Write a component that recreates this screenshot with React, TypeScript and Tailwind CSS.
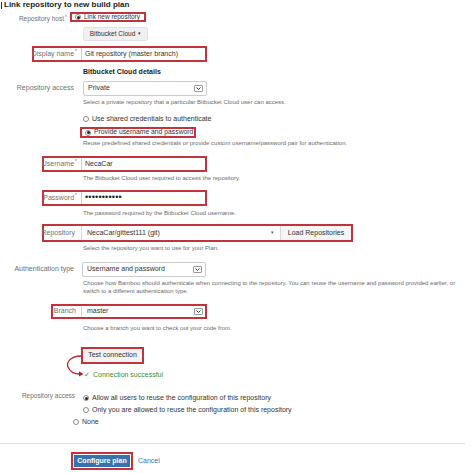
import React from 'react';

const Req = () => (
  <span className="text-[#d04437] text-[5px] relative -top-[2px] ml-[1px]">*</span>
);

const Radio = ({ checked }: { checked?: boolean }) => (
  <span className="inline-flex items-center justify-center w-[6px] h-[6px] rounded-full border border-[#8a8a8a] bg-white shrink-0">
    {checked && <span className="w-[3px] h-[3px] rounded-full bg-[#222]" />}
  </span>
);

const Chevron = () => (
  <span className="w-[9px] h-[7px] border border-[#9a9a9a] rounded-[1px] flex items-center justify-center bg-white">
    <svg width="5" height="3" viewBox="0 0 5 3">
      <path d="M0.5 0.5 L2.5 2.5 L4.5 0.5" fill="none" stroke="#333" strokeWidth="1" />
    </svg>
  </span>
);

const Help = ({ children, className = '' }: { children: React.ReactNode; className?: string }) => (
  <div className={`ml-[83px] text-[6px] leading-[8px] text-[#6b6b6b] whitespace-nowrap ${className}`}>{children}</div>
);

const App: React.FC = () => {
  return (
    <div className="w-[474px] h-[473px] bg-white overflow-hidden font-['Liberation_Sans',Arial,sans-serif] text-[#333] flex flex-col whitespace-nowrap">
      {/* title */}
      <div className="h-[10px] flex items-center pl-[1px]">
        <span className="w-[1px] h-[7px] bg-[#333] mr-[2px]" />
        <span className="text-[8px] font-bold text-[#222] leading-[10px]">Link repository to new build plan</span>
      </div>

      {/* repository host */}
      <div className="flex items-center h-[10px] mt-[2px]">
        <div className="w-[67px] text-right text-[6.5px] text-[#707070] leading-[10px] pt-[3px]">
          Repository host<Req />
        </div>
        <div className="ml-[3px] w-[76px] h-full border-2 border-[#c3333c] flex items-center gap-[3px] pl-[3px] text-[6.5px]">
          <Radio checked />
          <span>Link new repository</span>
        </div>
      </div>

      {/* bitbucket dropdown button */}
      <div className="mt-[5px] ml-[83px] w-[65px] h-[14px] bg-[#f0f0f0] border border-[#e2e2e2] rounded-[2px] flex items-center justify-center text-[6.5px] text-[#333]">
        Bitbucket Cloud <span className="ml-[3px] text-[5px]">▾</span>
      </div>

      {/* display name */}
      <div className="flex mt-[5px]">
        <div className="ml-[32px] w-[175px] h-[16px] border-2 border-[#c3333c] flex">
          <div className="w-[47px] flex items-center justify-end pr-[4px] text-[7px] text-[#707070]">
            Display name<Req />
          </div>
          <div className="flex-1 border-l border-[#cfcfcf] flex items-center pl-[3px] text-[7px]">Git repository (master branch)</div>
        </div>
      </div>

      {/* details heading */}
      <div className="mt-[6px] h-[8px] ml-[83px] text-[7px] font-bold leading-[8px] text-[#222]">Bitbucket Cloud details</div>

      {/* repository access select */}
      <div className="flex items-center h-[15px] mt-[5px]">
        <div className="w-[74px] text-right text-[7px] text-[#707070]">Repository access</div>
        <div className="ml-[9px] w-[124px] h-full border border-[#cccccc] rounded-[2px] flex items-center justify-between pl-[4px] pr-[3px] text-[7px]">
          Private
          <Chevron />
        </div>
      </div>
      <Help className="mt-[2px]">Select a private repository that a particular Bitbucket Cloud user can access.</Help>

      {/* auth radios */}
      <div className="mt-[9px] h-[8px] ml-[83px] flex items-center gap-[3px] text-[7px]">
        <Radio />
        <span>Use shared credentials to authenticate</span>
      </div>
      <div className="flex mt-[4px]">
        <div className="ml-[80px] w-[116px] h-[11px] border-2 border-[#c3333c] flex items-center gap-[3px] pl-[3px] text-[6.8px]">
          <Radio checked />
          <span>Provide username and password</span>
        </div>
      </div>
      <Help className="mt-[1px]">Reuse predefined shared credentials or provide custom username/password pair for authentication.</Help>

      {/* username */}
      <div className="flex mt-[9px]">
        <div className="ml-[42px] w-[165px] h-[16px] border-2 border-[#c3333c] flex">
          <div className="w-[37px] flex items-center justify-end pr-[4px] text-[7px] text-[#707070]">
            Username<Req />
          </div>
          <div className="flex-1 border-l border-[#cfcfcf] flex items-center pl-[3px] text-[7px]">NecaCar</div>
        </div>
      </div>
      <Help className="mt-[2px]">The Bitbucket Cloud user required to access the repository.</Help>

      {/* password */}
      <div className="flex mt-[8px]">
        <div className="ml-[42px] w-[165px] h-[16px] border-2 border-[#c3333c] flex">
          <div className="w-[37px] flex items-center justify-end pr-[4px] text-[7px] text-[#707070]">
            Password<Req />
          </div>
          <div className="flex-1 border-l border-[#cfcfcf] flex items-center pl-[3px] text-[9px] tracking-[0.2px] text-[#222]">•••••••••••</div>
        </div>
      </div>
      <Help className="mt-[3px]">The password required by the Bitbucket Cloud username.</Help>

      {/* repository */}
      <div className="flex mt-[7px]">
        <div className="ml-[42px] w-[311px] h-[18px] border-2 border-[#c3333c] flex">
          <div className="w-[37px] flex items-center justify-end pr-[6px] text-[7px] text-[#707070]">Repository</div>
          <div className="w-[200px] border-l border-r border-[#d6d6d6] flex items-center justify-between pl-[5px] pr-[6px] text-[7px]">
            NecaCar/gittest111 (git)
            <span className="text-[5px] text-[#555]">▾</span>
          </div>
          <div className="flex-1 bg-[#f5f5f5] flex items-center justify-center text-[7px]">Load Repositories</div>
        </div>
      </div>
      <Help className="mt-[2px]">Select the repository you want to use for your Plan.</Help>

      {/* auth type */}
      <div className="flex items-center h-[15px] mt-[10px]">
        <div className="w-[74px] text-right text-[7px] text-[#707070]">Authentication type</div>
        <div className="ml-[8px] w-[124px] h-full border border-[#cccccc] rounded-[2px] flex items-center justify-between pl-[4px] pr-[3px] text-[7px]">
          Username and password
          <Chevron />
        </div>
      </div>
      <Help className="mt-[2px]">
        Choose how Bamboo should authenticate when connecting to the repository. You can reuse the username and password provided earlier, or
        <br />
        switch to a different authentication type.
      </Help>

      {/* branch */}
      <div className="flex mt-[9px]">
        <div className="ml-[51px] w-[156px] h-[15px] border-2 border-[#c3333c] flex">
          <div className="w-[28px] flex items-center justify-end pr-[5px] text-[7px] text-[#707070]">Branch</div>
          <div className="flex-1 border-l border-[#d6d6d6] flex items-center justify-between pl-[5px] pr-[2px] text-[7px]">
            master
            <Chevron />
          </div>
        </div>
      </div>
      <Help className="mt-[5px]">Choose a branch you want to check out your code from.</Help>

      {/* test connection */}
      <div className="relative mt-[15px]">
        <div className="ml-[81px] w-[63px] h-[17px] border-2 border-[#c3333c] bg-[#f3f3f3] flex items-center justify-center text-[7px] text-[#333]">
          Test connection
        </div>
        <div className="mt-[7px] h-[8px] ml-[84px] flex items-center gap-[3px] text-[7px] text-[#2f8f3a]">
          <span className="text-[7px]">✓</span>
          <span>Connection successful</span>
        </div>
        <svg className="absolute left-[64px] top-[6px]" width="22" height="26" viewBox="0 0 22 26">
          <path d="M17 3 C7 3 2 9 4 14 C6 19 11 21 16 21" fill="none" stroke="#b0232d" strokeWidth="1.3" />
          <path d="M15 18.2 L19.5 21 L15 23.6 Z" fill="#b0232d" />
        </svg>
      </div>

      {/* repository access (reuse) */}
      <div className="flex items-center h-[8px] mt-[15px]">
        <div className="w-[75px] text-right text-[6.5px] text-[#707070] -mt-[4px]">Repository access</div>
        <div className="ml-[8px] flex items-center gap-[3px] text-[7px]">
          <Radio checked />
          <span>Allow all users to reuse the configuration of this repository</span>
        </div>
      </div>
      <div className="mt-[4px] h-[8px] ml-[83px] flex items-center gap-[3px] text-[7px]">
        <Radio />
        <span>Only you are allowed to reuse the configuration of this repository</span>
      </div>
      <div className="mt-[4px] h-[8px] ml-[73px] flex items-center gap-[3px] text-[7px]">
        <Radio />
        <span>None</span>
      </div>

      <div className="mt-[17px] h-[1px] w-[465px] bg-[#dddddd]" />

      {/* footer buttons */}
      <div className="flex items-center mt-[8px] h-[18px]">
        <div className="ml-[71px] w-[62px] h-full border-2 border-[#c3333c] p-[1px]">
          <div className="w-full h-full bg-[#3572b0] flex items-center justify-center text-[7px] font-bold text-white">Configure plan</div>
        </div>
        <span className="ml-[5px] text-[7px] text-[#3572b0]">Cancel</span>
      </div>
    </div>
  );
};

export default App;
